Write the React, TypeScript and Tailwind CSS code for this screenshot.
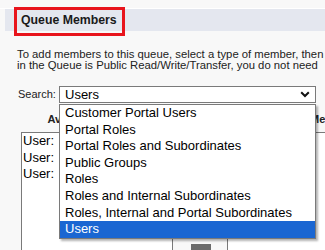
import React from "react";

const options = [
  "Customer Portal Users",
  "Portal Roles",
  "Portal Roles and Subordinates",
  "Public Groups",
  "Roles",
  "Roles and Internal Subordinates",
  "Roles, Internal and Portal Subordinates",
  "Users",
];

export default function App() {
  return (
    <div className="relative w-[325px] h-[250px] overflow-hidden bg-[#f8f8f8] font-['Liberation_Sans',Arial,sans-serif] text-[#222]">
      <div className="h-[8px]" />
      <div className="h-[1px] bg-white" />
      <div className="ml-[5px] h-[22px] bg-[#e4e7ef] flex items-center pl-[16px]">
        <span className="text-[12.3px] font-bold leading-none text-[#1a1a1a]">Queue Members</span>
      </div>
      <div className="absolute left-[14px] top-[7px] w-[111px] h-[29px] border-[3px] border-[#e8141c]" />

      <p className="mt-[18px] pl-[17px] text-[11.3px] leading-[11px] whitespace-nowrap text-[#222]">
        To add members to this queue, select a type of member, then
        <br />
        in the Queue is Public Read/Write/Transfer, you do not need
      </p>

      <div className="mt-[15px] flex items-center pl-[18px]">
        <span className="w-[41px] shrink-0 text-[11px] leading-[17px]">Search:</span>
        <div className="relative shrink-0 w-[257px] h-[17px] border border-[#7a7a7a] bg-white flex items-center pl-[5px] pr-[5px]">
          <span className="flex-1 text-[13px] leading-[15px] text-black">Users</span>
          <svg width="10" height="7" viewBox="0 0 10 7">
            <path d="M1.2 1.2 L5 5 L8.8 1.2" fill="none" stroke="#111" strokeWidth="2" />
          </svg>
          <div className="absolute left-[-1px] top-[17px] w-[257px] border border-[#7a7a7a] bg-white shadow-[2px_2px_2px_rgba(0,0,0,0.3)] z-10">
            {options.map((o) => (
              <div
                key={o}
                className={
                  o === "Users"
                    ? "h-[16.6px] pl-[5px] text-[13px] leading-[16.6px] bg-[#1a66d2] text-white whitespace-nowrap"
                    : "h-[16.6px] pl-[5px] text-[13px] leading-[16.6px] text-black whitespace-nowrap"
                }
              >
                {o}
              </div>
            ))}
          </div>
        </div>
      </div>

      <div className="mt-[10px] flex pl-[21px]">
        <div className="w-[152px] shrink-0 flex flex-col">
          <div className="text-center text-[11px] font-bold leading-[12px] h-[12px] whitespace-nowrap">Available Members</div>
          <div className="mt-[7px] h-[120px] border border-[#7a7a7a] bg-white pl-[1px]">
            <div className="text-[13px] leading-[16.6px] text-black">User:</div>
            <div className="text-[13px] leading-[16.6px] text-black">User:</div>
            <div className="text-[13px] leading-[16.6px] text-black">User:</div>
          </div>
        </div>
        <div className="w-[54px] shrink-0 flex flex-col items-center pt-[131px]">
          <div className="ml-[2px] w-[20px] h-[12px] bg-[#6b6b6b]" />
        </div>
        <div className="w-[152px] flex flex-col shrink-0">
          <div className="pl-[14px] text-center text-[11px] font-bold leading-[12px] h-[12px] whitespace-nowrap">Selected Members</div>
          <div className="mt-[7px] h-[120px] border border-[#7a7a7a] bg-white" />
        </div>
      </div>
    </div>
  );
}
